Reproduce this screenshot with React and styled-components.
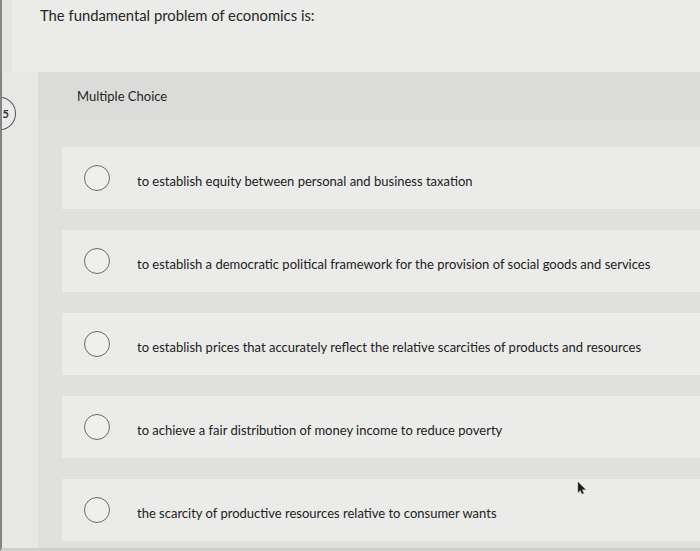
import React from 'react'
import styled, { createGlobalStyle } from 'styled-components'

const GlobalStyle = createGlobalStyle`
  html, body {
    margin: 0;
    padding: 0;
    background: #e9e9e8;
  }
  body {
    font-family: Lato, "Liberation Sans", sans-serif;
    color: #2b2b2b;
  }
`

const choices = [
  'to establish equity between personal and business taxation',
  'to establish a democratic political framework for the provision of social goods and services',
  'to establish prices that accurately reflect the relative scarcities of products and resources',
  'to achieve a fair distribution of money income to reduce poverty',
  'the scarcity of productive resources relative to consumer wants',
]

function App() {
  return (
    <>
      <GlobalStyle />
      <Screen>
        <Question>The fundamental problem of economics is:</Question>
        <Body>
          <Gutter>
            <Badge>5</Badge>
          </Gutter>
          <Panel>
            <PanelHeader>Multiple Choice</PanelHeader>
            <ChoiceList>
              {choices.map((text, i) => (
                <Choice key={i}>
                  <Radio />
                  <ChoiceText>{text}</ChoiceText>
                </Choice>
              ))}
            </ChoiceList>
          </Panel>
        </Body>
        <Cursor width="10" height="14" viewBox="0 0 10 14">
          <path d="M1 1 L1 11.5 L3.4 9.2 L5 13 L6.6 12.3 L5.1 8.6 L8.6 8.6 Z" fill="#1c1c1c" stroke="#666" strokeWidth="0.5" />
        </Cursor>
      </Screen>
    </>
  )
}

export default App

const Screen = styled.div`
  position: relative;
  width: 700px;
  height: 551px;
  box-sizing: border-box;
  display: flex;
  flex-direction: column;
  border-left: 2px solid #858585;
  border-bottom: 3px solid #cfcfce;
  background: #e9e9e8;
  overflow: hidden;
`

const Question = styled.div`
  height: 72px;
  flex-shrink: 0;
  padding: 6px 0 0 38px;
  box-sizing: border-box;
  font-size: 14.8px;
  color: #262626;
  background: linear-gradient(to right, #e4e4e3 0, #e4e4e3 10px, #ebebea 10px);
`

const Body = styled.div`
  flex: 1;
  display: flex;
`

const Gutter = styled.div`
  position: relative;
  width: 36px;
  flex-shrink: 0;
  background: #e7e7e6;
`

const Badge = styled.div`
  position: absolute;
  top: 25px;
  left: -18px;
  width: 32px;
  height: 33px;
  box-sizing: border-box;
  border: 1.5px solid #555;
  border-radius: 50%;
  background: #eaeae9;
  display: flex;
  align-items: center;
  justify-content: flex-end;
  padding-right: 6px;
  font-size: 11px;
  font-weight: 700;
  color: #333;
`

const Panel = styled.div`
  flex: 1;
  display: flex;
  flex-direction: column;
  background: #e0e0df;
`

const PanelHeader = styled.div`
  height: 48px;
  flex-shrink: 0;
  display: flex;
  align-items: center;
  padding-left: 39px;
  font-size: 13px;
  color: #262626;
  background: #dbdbda;
`

const ChoiceList = styled.div`
  display: flex;
  flex-direction: column;
  gap: 21px;
  padding: 27px 0 0 24px;
`

const Choice = styled.div`
  height: 62px;
  display: flex;
  align-items: center;
  gap: 27px;
  padding: 0 0 0 22px;
  background: #ebebea;
`

const Radio = styled.span`
  width: 24px;
  height: 24px;
  flex-shrink: 0;
  border: 1.5px solid #6b6b6b;
  border-radius: 50%;
  background: #efefee;
`

const ChoiceText = styled.span`
  font-size: 13px;
  color: #222;
  padding-top: 6px;
`

const Cursor = styled.svg`
  position: absolute;
  left: 575px;
  top: 481px;
`
